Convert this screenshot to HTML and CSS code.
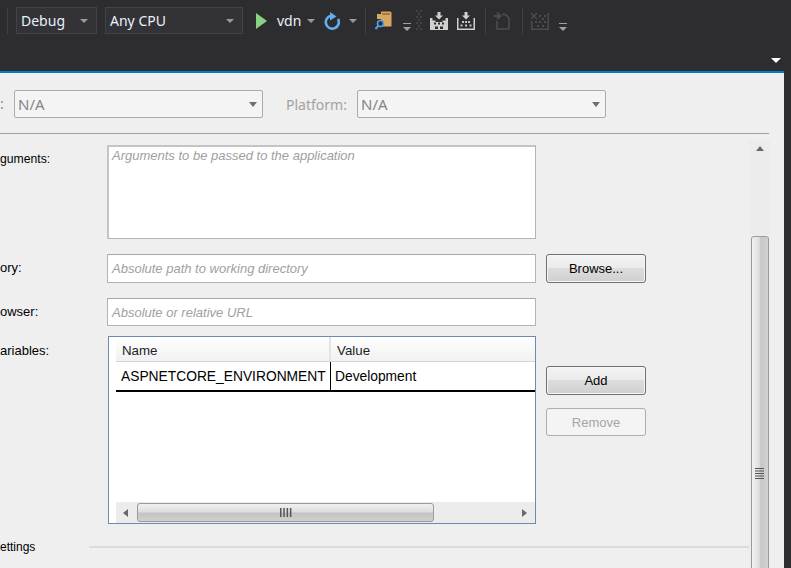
FILE: index.html
```html
<!DOCTYPE html>
<html lang="en">
<head>
<meta charset="utf-8">
<title>Project properties</title>
<link rel="stylesheet" href="styles.css">
</head>
<body>
<header class="toolbar">
  <span class="sep sep-first"></span>
  <div class="tcombo tcombo-debug"><span>Debug</span><i class="tarrow"></i></div>
  <div class="tcombo tcombo-cpu"><span>Any CPU</span><i class="tarrow"></i></div>
  <svg class="ico play" width="11" height="16" viewBox="0 0 11 16"><path d="M0 0L11 8L0 16Z" fill="#89d185"/></svg>
  <span class="run">vdn</span>
  <i class="tarrow run-arrow"></i>
  <svg class="ico refresh" width="18" height="18" viewBox="0 0 18 18"><path d="M7 3.800A6.500 6.500 0 1 0 14 7" fill="none" stroke="#60aef0" stroke-width="2.600"/><path d="M6 0V8.500L12.500 4.500Z" fill="#60aef0"/></svg>
  <i class="tarrow refresh-arrow"></i>
  <span class="sep sep-a"></span>
  <svg class="ico folder" width="18" height="19" viewBox="0 0 18 19"><path d="M2 7V3H6V1.500Q6 0.500 7 0.500H15Q16.500 0.500 16.500 2V15.500H6V8H2Z" fill="#d9a760"/><path d="M7 2H15V4H7Z" fill="#a87c3e"/><circle cx="5.500" cy="12.500" r="3" fill="#2d2d30" stroke="#4ea0ea" stroke-width="1.600"/><path d="M3.500 14.500L0.500 18" stroke="#4ea0ea" stroke-width="2"/></svg>
  <span class="over over-a"><b></b><i></i></span>
  <svg class="ico dots" width="6" height="21" viewBox="0 0 6 21"><path d="M0 0h2v2H0zM4 0h2v2H4zM2 3h2v2H2zM0 6h2v2H0zM4 6h2v2H4zM2 9h2v2H2zM0 12h2v2H0zM4 12h2v2H4zM2 15h2v2H2zM0 18h2v2H0zM4 18h2v2H4z" fill="#424245"/></svg>
  <svg class="ico tray-a" width="18" height="18" viewBox="0 0 18 18"><path d="M7.500 0h3v3.500H13L9 7.500 5 3.500h2.500z" fill="#d0d0d0"/><path d="M0 6h2.500v2.500h3v1.500h7V8.500h3V6H18v12H0z" fill="#d0d0d0"/><path d="M4 10.500h2v2H4zM8 10.500h2v2H8zM12 10.500h2v2h-2zM5 14.500h3V17H5zM10 14.500h3V17h-3z" fill="#2d2d30"/></svg>
  <svg class="ico tray-b" width="18" height="18" viewBox="0 0 18 18"><path d="M7.500 0h3v3.500H13L9 7.500 5 3.500h2.500z" fill="#d0d0d0"/><path d="M0 6h1.500v10.500h15V6H18v12H0z" fill="#d0d0d0"/><path d="M5 9h2v2H5zM8 9h2v2H8zM11 9h2v2h-2zM3.500 12.500h2v2h-2zM8 12.500h2v2H8zM12.500 12.500h2v2h-2z" fill="#c4c4c4"/></svg>
  <span class="sep sep-b"></span>
  <svg class="ico doc" width="16" height="18" viewBox="0 0 16 18"><path d="M8 2.500h3.500l3.500 3.500V17H3V9" fill="none" stroke="#4c4c4f" stroke-width="1.600"/><path d="M0 4h5M3 1l3.500 3L3 7" fill="none" stroke="#4c4c4f" stroke-width="2"/></svg>
  <span class="sep sep-c"></span>
  <svg class="ico grid-off" width="18" height="18" viewBox="0 0 18 18"><path d="M0 1l6 6M6 1L0 7" stroke="#4c4c4f" stroke-width="1.400"/><path d="M0 9h1.500v7.500h15V1H18v17H0z" fill="#4c4c4f"/><path d="M8 3h2v2H8zM13 3h2v2h-2zM11 6h2v2h-2zM4 9h2v2H4zM8 9h2v2H8zM13 9h2v2h-2zM6 13h2v2H6zM11 13h2v2h-2z" fill="#4c4c4f"/></svg>
  <span class="over over-b"><b></b><i></i></span>
</header>
<div class="tabstrip"><i class="tab-menu"></i></div>
<main class="panel">
  <div class="config">
    <span class="config-frag">:</span>
    <div class="pcombo"><span>N/A</span><i></i></div>
    <span class="config-label">Platform:</span>
    <div class="pcombo"><span>N/A</span><i></i></div>
  </div>
  <hr class="rule">
  <div class="body">
    <form class="form">
      <label class="lbl lbl-small">guments:</label>
      <div class="input area">Arguments to be passed to the application</div>
      <div></div>

      <label class="lbl">ory:</label>
      <div class="input line">Absolute path to working directory</div>
      <div class="btn-col"><button type="button" class="btn">Browse...</button></div>

      <label class="lbl">owser:</label>
      <div class="input line short">Absolute or relative URL</div>
      <div></div>

      <label class="lbl lbl-low">ariables:</label>
      <div class="grid">
        <div class="grid-head">
          <span class="c1">Name</span><span class="c2">Value</span>
        </div>
        <div class="grid-row">
          <span class="c1">ASPNETCORE_ENVIRONMENT</span><span class="c2">Development</span>
        </div>
        <div class="grid-empty"></div>
        <div class="hscroll">
          <i class="arr arr-l"></i>
          <div class="hthumb"><svg width="12" height="9" viewBox="0 0 12 9"><path d="M0 0h1.500v9H0zM3.300 0h1.500v9H3.300zM6.600 0h1.500v9H6.600zM9.900 0h1.500v9H9.900z" fill="#555"/></svg></div>
          <i class="arr arr-r"></i>
        </div>
      </div>
      <div class="btn-col btn-stack">
        <button type="button" class="btn">Add</button>
        <button type="button" class="btn off">Remove</button>
      </div>
    </form>
    <div class="section"><span>ettings</span><i></i></div>
    <div class="vscroll">
      <i class="arr-up"></i>
      <div class="vthumb"><svg width="9" height="11" viewBox="0 0 9 11"><path d="M0 0h9v1H0zM0 2.500h9v1H0zM0 5h9v1H0zM0 7.500h9v1H0zM0 10h9v1H0z" fill="#555"/></svg></div>
    </div>
  </div>
</main>
</body>
</html>
```
FILE: styles.css
```css
* { box-sizing: border-box; }
html, body { margin: 0; height: 100%; }
body {
  width: 791px; height: 568px; overflow: hidden;
  background: #2d2d30;
  display: flex; flex-direction: column;
  font-family: "Liberation Sans", Arial, sans-serif;
}

/* Toolbar */
.toolbar {
  height: 46px; flex: none; padding-top: 7px; padding-bottom: 12px;
  display: flex; align-items: center;
  color: #e8f1fa;
  font: 14px "Noto Sans", sans-serif;
}
.sep { width: 1px; height: 26px; background: #3f3f42; flex: none; }
.sep-first { margin-left: 7px; }
.tcombo {
  height: 27px; flex: none; display: flex; align-items: center; justify-content: space-between;
  background: #333337; border: 1px solid #434346;
  padding: 0 8px 0 4px;
}
.tcombo-debug { width: 81px; margin-left: 8px; }
.tcombo-cpu { width: 138px; margin-left: 8px; }
.tarrow {
  display: block; width: 0; height: 0; flex: none;
  border-left: 4px solid transparent; border-right: 4px solid transparent;
  border-top: 4px solid #999;
}
.ico { flex: none; display: block; }
.play { margin-left: 13px; }
.run { margin-left: 10px; width: 24px; flex: none; }
.run-arrow { margin-left: 6px; }
.refresh { margin-left: 9px; }
.refresh-arrow { margin-left: 7px; }
.sep-a { margin-left: 8px; }
.folder { margin-left: 9px; }
.over { display: flex; flex-direction: column; align-items: center; gap: 3px; width: 8px; flex: none; margin-top: 13px; }
.over b { display: block; width: 8px; height: 1px; background: #a0a0a0; }
.over i { display: block; width: 0; height: 0; border-left: 4px solid transparent; border-right: 4px solid transparent; border-top: 4px solid #a0a0a0; }
.over-a { margin-left: 10px; }
.dots { margin-left: 5px; }
.tray-a { margin-left: 8px; }
.tray-b { margin-left: 9px; }
.sep-b { margin-left: 10px; }
.doc { margin-left: 8px; }
.sep-c { margin-left: 12px; }
.grid-off { margin-left: 8px; }
.over-b { margin-left: 10px; }

.tabstrip { height: 25px; flex: none; display: flex; justify-content: flex-end; align-items: flex-start; padding: 12px 10px 0 0; }
.tab-menu {
  display: block; width: 0; height: 0;
  border-left: 5px solid transparent; border-right: 5px solid transparent;
  border-top: 5px solid #fff;
}

/* Panel */
.panel {
  flex: 1; min-height: 0; margin-right: 7px; overflow: hidden;
  background: #efefef; border-top: 2px solid #007acc;
  display: flex; flex-direction: column;
  color: #000; font-size: 13px;
}
.config { height: 28px; margin-top: 17px; flex: none; display: flex; align-items: center; font: 14px "Noto Sans", sans-serif; color: #8b8b8b; }
.config-frag { width: 14px; flex: none; margin-top: -1px; }
.config-label { width: 94px; flex: none; padding-left: 23px; color: #a2a2a2; }
.pcombo {
  width: 249px; height: 28px; flex: none;
  display: flex; align-items: center; justify-content: space-between;
  background: #f4f4f4; border: 1px solid #ababab; border-radius: 2px;
  padding: 0 5px 0 3px; color: #858585; font-size: 15px;
}
.pcombo i { display: block; width: 0; height: 0; border-left: 4.500px solid transparent; border-right: 4.500px solid transparent; border-top: 5px solid #6f6f6f; }
.rule { height: 1px; margin: 15px 15px 0 0; flex: none; border: 0; background: #a0a0a0; }

.body { flex: 1; min-height: 0; position: relative; padding-top: 11px; }
.form {
  width: 646px;
  display: grid; grid-template-columns: 107px 429px 110px;
  grid-template-rows: 109px 44px 38px 188px;
}
.lbl { padding-top: 5px; line-height: 18px; }
.lbl-small { font-size: 12.200px; }
.lbl-low { padding-top: 6px; }
.input {
  background: #fff; border: 1px solid #b4b4b4; border-top-color: #a8a8a8;
  padding: 0 4px; color: #a0a0a0; font-style: italic; font-size: 13px;
  white-space: nowrap; overflow: hidden;
}
.line { height: 29px; line-height: 27px; }
.short { height: 28px; }
.area { height: 94px; border-width: 2px 1px 1px 2px; border-color: #c4c4c4 #b4b4b4 #b4b4b4 #c4c4c4; padding: 0 3px; line-height: 17px; }
.btn-col { padding-left: 10px; }
.btn {
  display: block; width: 100px; height: 29px; padding: 0;
  font: 13px "Liberation Sans", Arial, sans-serif; color: #000;
  border: 1px solid #707070; border-radius: 3px;
  background: linear-gradient(#f3f3f3 0, #ebebeb 48%, #dddddd 50%, #cfcfcf 100%);
  box-shadow: inset 0 0 0 1px #f7f7f7;
}
.btn.off { height: 28px; margin-top: 13px; color: #a5a5a5; background: #f4f4f4; border-color: #adadad; box-shadow: none; }
.btn-stack { padding-top: 30px; }

/* Environment grid */
.grid {
  height: 188px;
  margin-left: 1px; background: #fff; border: 1px solid #6a8cb0;
  display: flex; flex-direction: column;
  font-size: 13.8px;
}
.grid-head, .grid-row { display: flex; margin-left: 7px; flex: none; }
.grid-head {
  height: 25px; align-items: center; font-size: 13.300px; color: #222;
  background: linear-gradient(#fff, #f0f1f2); border-bottom: 1px solid #d6d6d6;
}
.grid-head .c1 { width: 215px; padding-left: 6px; border-right: 2px solid #e4e4e4; height: 100%; line-height: 27px; }
.grid-head .c2 { padding-left: 6px; padding-top: 2px; }
.grid-row { height: 30px; align-items: stretch; border-bottom: 2px solid #000; line-height: 30px; white-space: nowrap; }
.grid-row .c1 { width: 215px; padding-left: 5px; border-right: 1px solid #000; }
.grid-row .c2 { padding-left: 4px; }
.grid-empty { flex: 1; }
.hscroll { height: 21px; flex: none; margin-left: 7px; background: #ececec; display: flex; align-items: center; }
.arr { display: block; width: 0; height: 0; border-top: 4px solid transparent; border-bottom: 4px solid transparent; }
.arr-l { margin-left: 7px; border-right: 5px solid #6a6a6a; }
.arr-r { margin-left: auto; margin-right: 8px; border-left: 5px solid #6a6a6a; }
.hthumb {
  width: 297px; height: 19px; margin-left: 9px;
  border: 1px solid #9a9a9a; border-radius: 3px;
  background: linear-gradient(#f0f0f0, #dedede 45%, #c4c4c4 55%, #d0d0d0);
  display: flex; align-items: center; justify-content: center;
}

/* Section heading */
.section {
  width: 749px; height: 18px; margin-top: 14px; display: flex; align-items: center;
}
.section span { width: 89px; flex: none; font-size: 12px; }
.section i { flex: 1; height: 2px; background: #dcdcdc; display: block; }

/* Vertical scrollbar lies over the panel's right margin */
.vscroll {
  position: absolute; left: 749px; top: 6px; width: 21px; height: 600px;
  background: #ececec; display: flex; flex-direction: column; align-items: center;
}
.arr-up { display: block; width: 0; height: 0; margin-top: 6px; border-left: 4px solid transparent; border-right: 4px solid transparent; border-bottom: 5px solid #6a6a6a; }
.vthumb {
  width: 18px; height: 474px; flex: none; margin-top: 85px;
  border: 1px solid #9a9a9a; border-radius: 3px 3px 0 0;
  background: linear-gradient(90deg, #f2f2f2, #dedede 45%, #c6c6c6 55%, #d2d2d2);
  display: flex; align-items: center; justify-content: center;
}
```
